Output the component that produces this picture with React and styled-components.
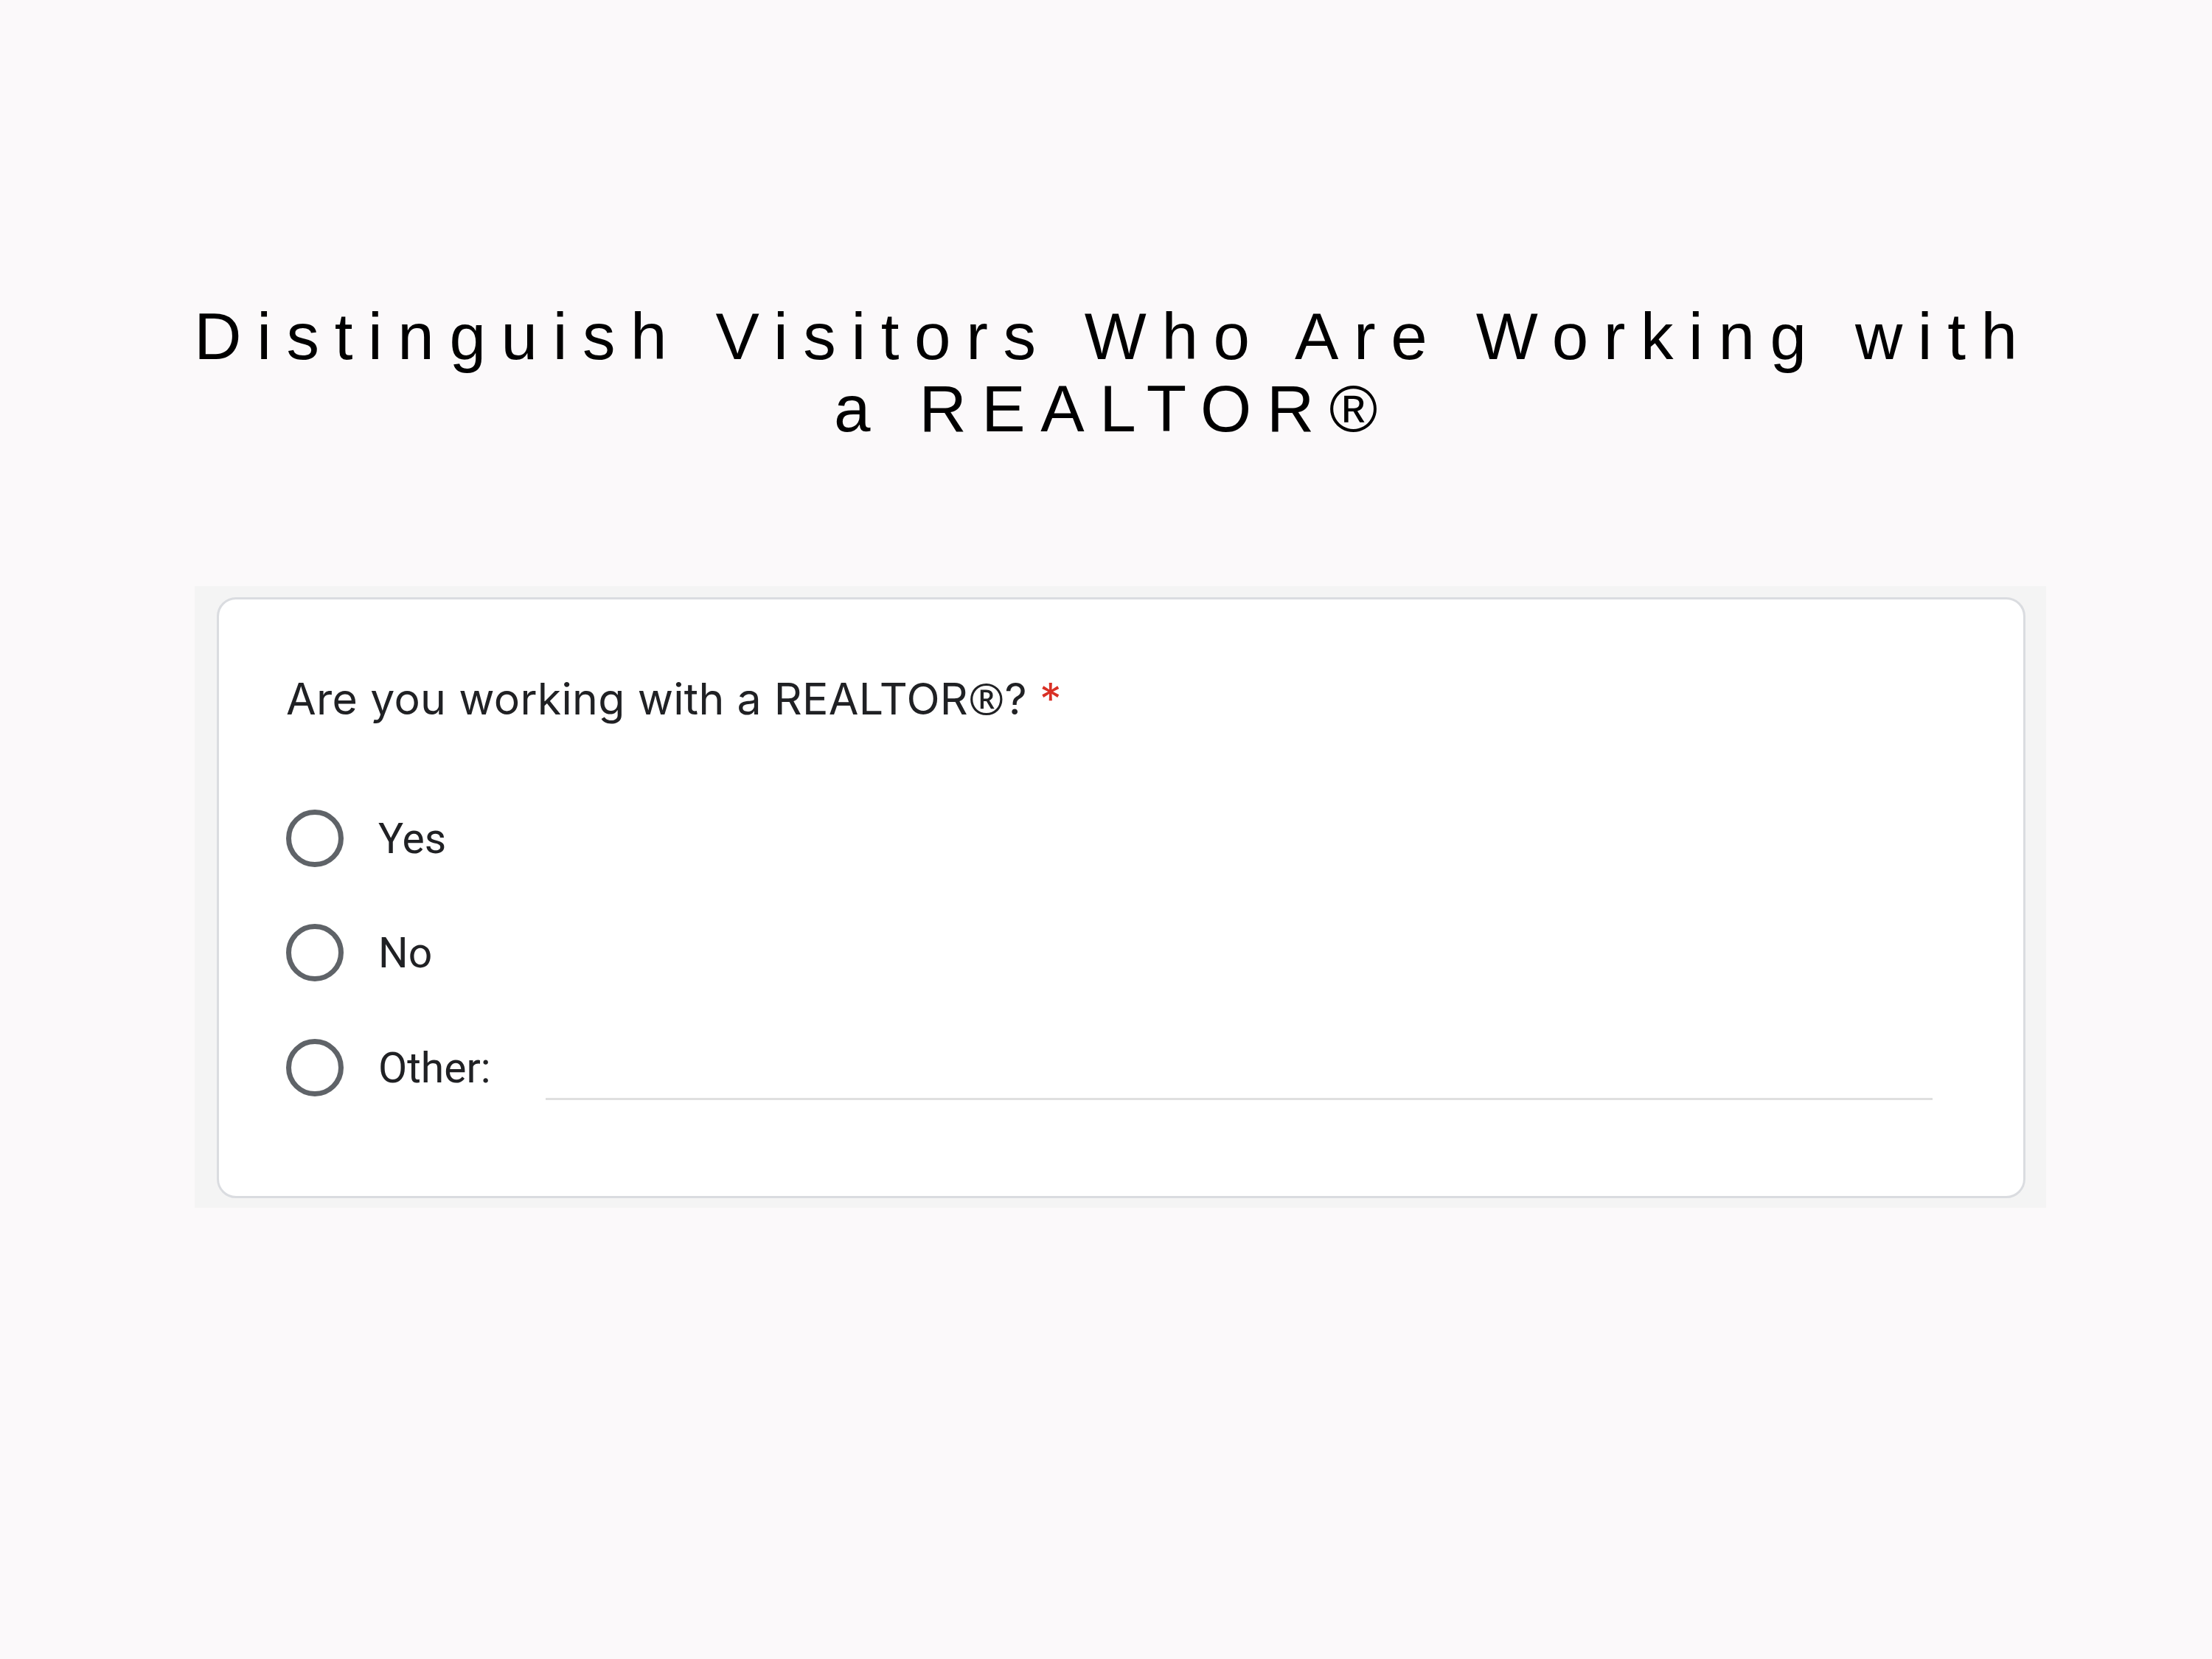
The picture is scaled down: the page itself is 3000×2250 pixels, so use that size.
import React from "react";
import styled, { createGlobalStyle } from "styled-components";

const GlobalStyle = createGlobalStyle`
  html, body {
    margin: 0;
    padding: 0;
    background: #fbf9fa;
  }
`;

const Page = styled.div`
  min-height: 2250px;
  box-sizing: border-box;
  padding-top: 407px;
  background: #fbf9fa;
`;

const Title = styled.h1`
  margin: 0;
  padding-left: 20px;
  font-family: "Liberation Sans", Arial, sans-serif;
  font-weight: 400;
  font-size: 89px;
  line-height: 98px;
  letter-spacing: 20.6px;
  color: #000;
  text-align: center;
`;

const Frame = styled.div`
  margin: 192px 0 0 264px;
  width: 2511px;
  box-sizing: border-box;
  padding: 15px 28px 13px 30px;
  background: #f4f4f4;
`;

const Card = styled.div`
  display: flex;
  flex-direction: column;
  background: #fff;
  border: 3px solid #dadce0;
  border-radius: 26px;
  padding: 95px 123px 134px 91px;
`;

const Question = styled.div`
  height: 80px;
  font-family: Inter, "Open Sans", sans-serif;
  font-size: 59px;
  line-height: 80px;
  letter-spacing: 0.3px;
  color: #202124;
`;

const Mark = styled.span`
  font-family: "Open Sans", sans-serif;
  line-height: 0;
`;

const Required = styled.span`
  color: #d93025;
`;

const Options = styled.div`
  display: flex;
  flex-direction: column;
  gap: 77px;
  margin-top: 110px;
`;

const Row = styled.label`
  display: flex;
  align-items: center;
`;

const Radio = styled.span`
  flex: none;
  width: 78px;
  height: 78px;
  box-sizing: border-box;
  border: 7px solid #5f6368;
  border-radius: 50%;
`;

const Label = styled.span`
  margin-left: 47px;
  font-family: Roboto, sans-serif;
  font-size: 57px;
  color: #202124;
`;

const OtherInput = styled.div`
  flex: 1;
  height: 84px;
  margin-bottom: -4px;
  box-sizing: border-box;
  margin-left: 74px;
  border-bottom: 3px solid #dfdfdf;
`;

const choices = ["Yes", "No"];

export default function App() {
  return (
    <Page>
      <GlobalStyle />
      <Title>
        Distinguish Visitors Who Are Working with
        <br />a REALTOR®
      </Title>
      <Frame>
        <Card>
          <Question>
            Are you working with a REALTOR<Mark>®</Mark>? <Required>*</Required>
          </Question>
          <Options>
            {choices.map((c) => (
              <Row key={c}>
                <Radio />
                <Label>{c}</Label>
              </Row>
            ))}
            <Row>
              <Radio />
              <Label>Other:</Label>
              <OtherInput />
            </Row>
          </Options>
        </Card>
      </Frame>
    </Page>
  );
}
